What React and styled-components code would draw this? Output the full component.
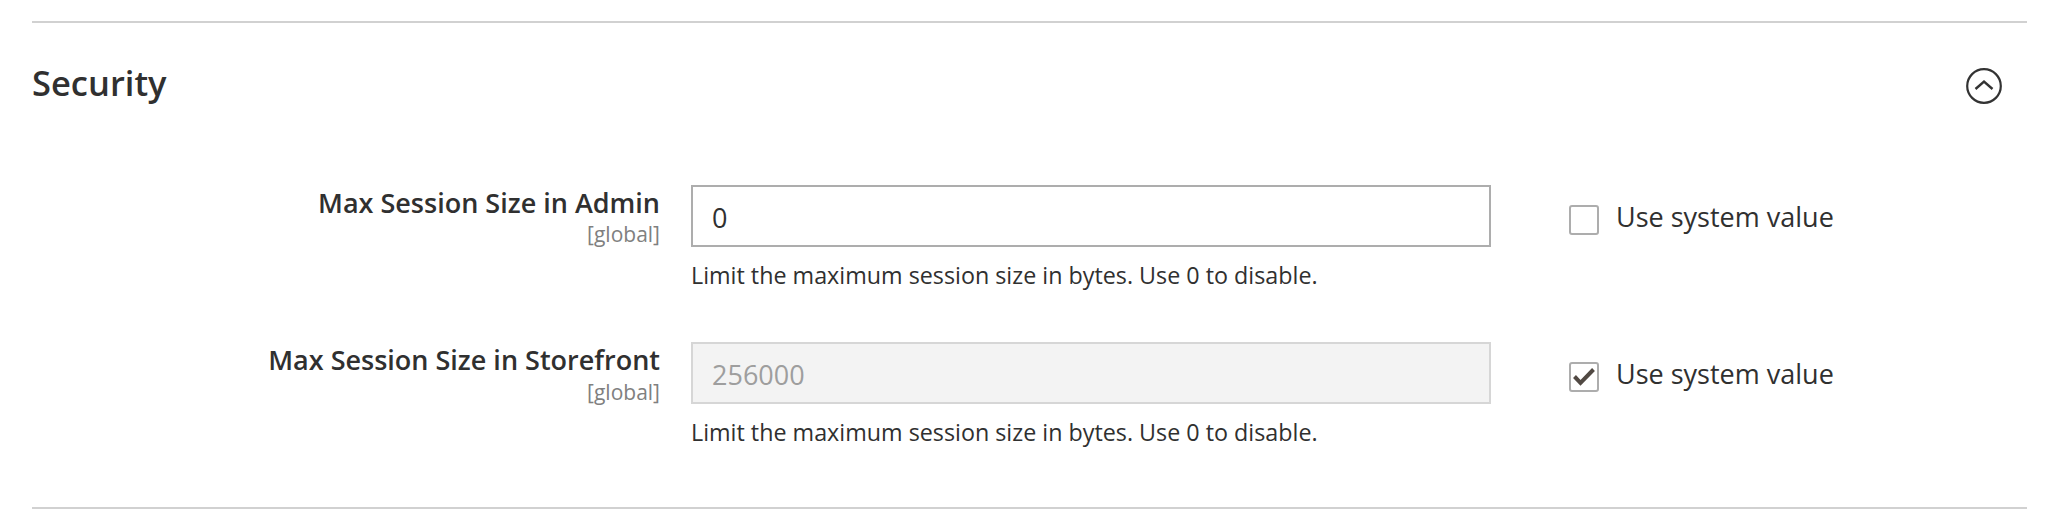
import styled, { createGlobalStyle } from "styled-components";

const GlobalStyle = createGlobalStyle`
  html, body {
    margin: 0;
    padding: 0;
    background: #ffffff;
  }
  body {
    font-family: "Open Sans", "Liberation Sans", sans-serif;
    color: #303030;
  }
`;

const fields = [
  {
    id: "admin",
    label: "Max Session Size in Admin",
    value: "0",
    disabled: false,
  },
  {
    id: "storefront",
    label: "Max Session Size in Storefront",
    value: "256000",
    disabled: true,
  },
];

function CollapseIcon() {
  return (
    <svg width="36" height="36" viewBox="0 0 36 36">
      <circle cx="18" cy="18" r="16.8" fill="none" stroke="#333" strokeWidth="2.2" />
      <polyline
        points="9.5,21 18,13.5 26.5,21"
        fill="none"
        stroke="#333"
        strokeWidth="2.4"
      />
    </svg>
  );
}

export default function App() {
  return (
    <>
      <GlobalStyle />
      <Section>
        <Header>
          <Title>Security</Title>
          <Toggle>
            <CollapseIcon />
          </Toggle>
        </Header>

        <Rows>
          {fields.map((f) => (
            <Row key={f.id}>
              <Label>
                <span>{f.label}</span>
                <Scope>[global]</Scope>
              </Label>
              <Control>
                <Input $disabled={f.disabled}>{f.value}</Input>
                <Note>Limit the maximum session size in bytes. Use 0 to disable.</Note>
              </Control>
              <UseDefault>
                <Checkbox $checked={f.disabled}>
                  {f.disabled && (
                    <svg width="26" height="26" viewBox="0 0 26 26">
                      <path d="M3.5 12.5 L9.5 18.8 L22.5 5.5" fill="none" stroke="#514943" strokeWidth="4" />
                    </svg>
                  )}
                </Checkbox>
                <CheckLabel>Use system value</CheckLabel>
              </UseDefault>
            </Row>
          ))}
        </Rows>
      </Section>
    </>
  );
}

const Section = styled.section`
  margin: 21px 21px 0 32px;
  border-top: 2px solid #d1d1d1;
  border-bottom: 2px solid #d1d1d1;
  padding-bottom: 58px;
`;

const Header = styled.div`
  display: flex;
  justify-content: space-between;
  align-items: center;
  padding: 39px 25px 0 0;
`;

const Title = styled.h2`
  margin: 0;
  font-size: 34.5px;
  line-height: 1.2;
  font-weight: 600;
  color: #303030;
`;

const Toggle = styled.div`
  display: flex;
  width: 36px;
  height: 36px;
  margin-top: 6px;
`;

const Rows = styled.div`
  display: flex;
  flex-direction: column;
  gap: 50.5px;
  padding-top: 81px;
`;

const Row = styled.div`
  display: flex;
  align-items: flex-start;
`;

const Label = styled.label`
  width: 628px;
  margin-right: 31px;
  padding-top: 2px;
  display: flex;
  flex-direction: column;
  align-items: flex-end;
  text-align: right;
  font-size: 27px;
  line-height: 1.2;
  font-weight: 600;
  color: #303030;
`;

const Scope = styled.span`
  margin-top: 3px;
  font-size: 21px;
  line-height: 1.2;
  font-weight: 400;
  color: #808080;
`;

const Control = styled.div`
  width: 800px;
  display: flex;
  flex-direction: column;
`;

const Input = styled.div`
  box-sizing: border-box;
  height: 62px;
  display: flex;
  align-items: center;
  padding: 2px 19px 0;
  font-size: 27px;
  border: 2px solid ${(p) => (p.$disabled ? "#d6d6d6" : "#adadad")};
  background: ${(p) => (p.$disabled ? "#f3f3f3" : "#ffffff")};
  color: ${(p) => (p.$disabled ? "#9e9e9e" : "#303030")};
`;

const Note = styled.div`
  margin-top: 12px;
  font-size: 23.3px;
  line-height: 1.4;
  color: #303030;
`;

const UseDefault = styled.div`
  display: flex;
  align-items: flex-start;
  margin-left: 78px;
  padding-top: 16px;
  gap: 17px;
`;

const Checkbox = styled.span`
  box-sizing: border-box;
  width: 30px;
  height: 30px;
  margin-top: 3.5px;
  border: 2px solid #adadad;
  border-radius: 3px;
  background: #ffffff;
  display: flex;
  align-items: center;
  justify-content: center;
`;

const CheckLabel = styled.span`
  font-size: 27px;
  line-height: 1.2;
  color: #303030;
`;
